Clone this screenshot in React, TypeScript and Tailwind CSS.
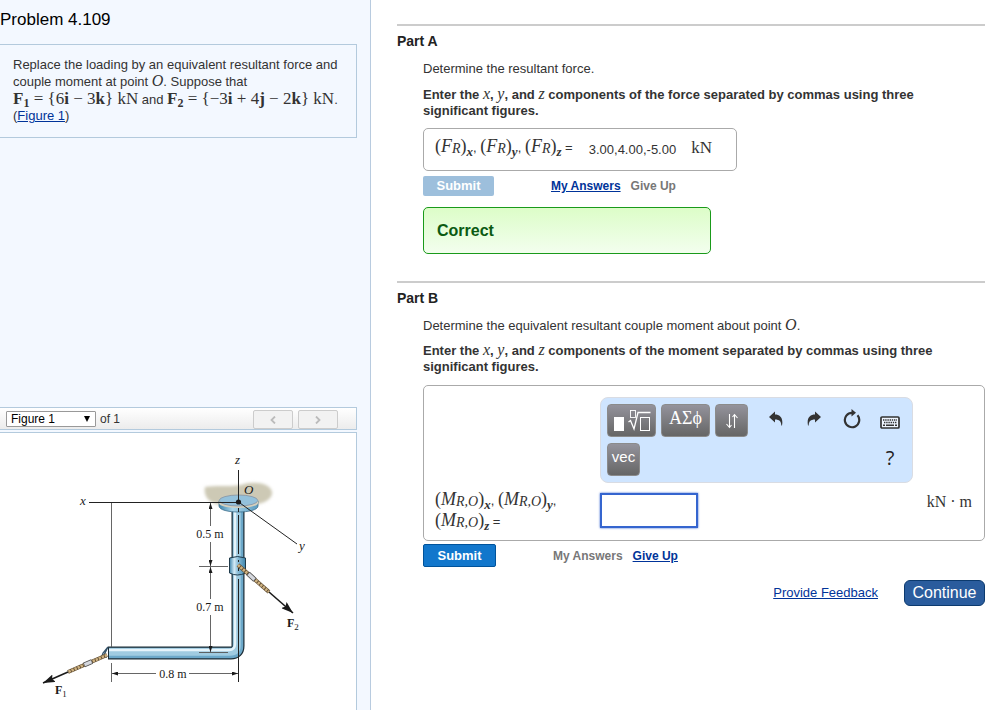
import type { ReactNode } from 'react';

function Sub({ children }: { children: ReactNode }) {
  return <sub className="bottom-0 align-[-3px] text-[12px] leading-none">{children}</sub>;
}

function Var({ children }: { children: ReactNode }) {
  return <i className="font-['Liberation_Serif',serif] text-[16px] leading-none font-normal">{children}</i>;
}

function Component({ name, of, axis }: { name: string; of: string; axis: string }) {
  return (
    <span className="font-['Liberation_Serif',serif] text-[18px] leading-none whitespace-nowrap">
      (<i>{name}</i>
      <sub className="bottom-0 align-[-1px] text-[14px] leading-none italic">{of}</sub>)
      <sub className="bottom-0 align-[-4px] text-[13px] leading-none font-bold italic">{axis}</sub>
    </span>
  );
}

function Part({ title, children }: { title: string; children: ReactNode }) {
  return (
    <section className="border-t-2 border-[#ccc] pt-[5px]">
      <h2 className="text-[14px] leading-5 font-bold text-[#222]">{title}</h2>
      <div className="pl-[26px]">{children}</div>
    </section>
  );
}

function AxisNote({ what }: { what: string }) {
  return (
    <p className="pr-6 text-[13px] leading-4 font-bold">
      Enter the <Var>x</Var>, <Var>y</Var>, and <Var>z</Var> components of the {what} separated by commas using three
      significant figures.
    </p>
  );
}

function Rope({ x1, y1, x2, y2 }: { x1: number; y1: number; x2: number; y2: number }) {
  return (
    <g>
      <line x1={x1} y1={y1} x2={x2} y2={y2} stroke="#5d4a30" strokeWidth="4" />
      <line x1={x1} y1={y1} x2={x2} y2={y2} stroke="#cdb180" strokeWidth="2.8" strokeDasharray="2.4 .9" />
    </g>
  );
}

function PipeFigure() {
  return (
    <svg
      viewBox="0 0 356 277"
      width="356"
      height="277"
      role="img"
      aria-label="Pipe assembly with forces F1 and F2"
      className="block font-['Liberation_Serif',serif]"
      fill="#1a1a1a"
    >
      <defs>
        <linearGradient id="pipeV" x1="0" x2="1">
          <stop offset="0" stopColor="#3f86ad" />
          <stop offset=".3" stopColor="#d4ebf6" />
          <stop offset=".5" stopColor="#8fc0da" />
          <stop offset="1" stopColor="#3f86ad" />
        </linearGradient>
        <linearGradient id="flange" x1="0" x2="1">
          <stop offset="0" stopColor="#3f86ad" />
          <stop offset=".35" stopColor="#a9d5ea" />
          <stop offset="1" stopColor="#5b9cc0" />
        </linearGradient>
        <filter id="soft" x="-20%" y="-40%" width="140%" height="180%">
          <feGaussianBlur stdDeviation="1.5" />
        </filter>
        <marker id="tip" viewBox="0 0 6 4" refX="6" refY="2" markerWidth="6" markerHeight="4" markerUnits="userSpaceOnUse" orient="auto">
          <path d="M0 0L6 2L0 4z" />
        </marker>
        <marker id="force" viewBox="0 0 12 8" refX="12" refY="4" markerWidth="12" markerHeight="8" markerUnits="userSpaceOnUse" orient="auto">
          <path d="M0 0L12 4L0 8L2 4z" />
        </marker>
      </defs>

      {/* ceiling */}
      <path d="M205 54C214 52 228 54 241 52C252 48 270 49 272 59C273 67 262 71 252 72H221C209 71 203 63 205 54z" fill="#cdc9b5" filter="url(#soft)" />

      {/* pipe: dark outline, body, then highlight */}
      <g fill="none" strokeLinejoin="round">
        <path d="M238 74V213Q238 220 231 220H108" stroke="#1d2c35" strokeWidth="13" />
        <path d="M238 74V213Q238 220 231 220H109" stroke="#6ca8c9" strokeWidth="10.600" />
        <path d="M237 74V212Q237 219 230 219H109" stroke="#9fcbe1" strokeWidth="7.500" />
        <path d="M235 74V211Q235 217 229 217H109" stroke="#e6f4fb" strokeWidth="2.400" />
      </g>
      <path d="M229.500 125Q237.500 122 245.500 125V140Q237.500 144 229.500 140z" fill="url(#pipeV)" stroke="#1f3a4a" />

      {/* flange */}
      <path d="M219 68V73C219 81 258 81 258 73V68z" fill="url(#flange)" stroke="#3e6f8b" strokeWidth=".8" />
      <path d="M219 68V70C219 76.500 258 76.500 258 70V68z" fill="#d5d0bd" />
      <ellipse cx="238.500" cy="67.500" rx="19.300" ry="5.500" fill="#94c1db" stroke="#8793a2" strokeWidth=".8" />

      {/* axes */}
      <g stroke="#222" fill="none">
        <path d="M89 69.500H238M238.500 37V69M238.500 69L297 111" />
        <path d="M238.500 75V79M238.500 82V121M238.500 127V129M238.500 132V138M238.500 146V249" />
      </g>
      <circle cx="238.500" cy="69" r="2.600" />

      {/* dimensions */}
      <g stroke="#555" strokeWidth=".9" fill="none">
        <path d="M111.500 70V214M111.500 230V249M199 133.500H228M199 219.500H228" />
        <path d="M210.500 93V70" markerEnd="url(#tip)" />
        <path d="M210.500 109V133" markerEnd="url(#tip)" />
        <path d="M210.500 166V134" markerEnd="url(#tip)" />
        <path d="M210.500 182V219" markerEnd="url(#tip)" />
        <path d="M156 240.500H112" markerEnd="url(#tip)" />
        <path d="M189 240.500H238" markerEnd="url(#tip)" />
      </g>

      {/* cables and forces */}
      <path d="M108 214L103 220L102 223L107 224M108 214L104 222" fill="none" stroke="#35536a" strokeWidth="1.300" />
      <Rope x1={107} y1={222} x2={68} y2={239} />
      <line x1="92" y1="228.500" x2="84" y2="232" stroke="#555" strokeWidth="5" />
      <line x1="91.500" y1="228.700" x2="84.500" y2="231.800" stroke="#d5d8de" strokeWidth="3.200" />
      <line x1="68" y1="239" x2="43" y2="250" stroke="#1a1a1a" strokeWidth="1.600" markerEnd="url(#force)" />
      <Rope x1={238} y1={132} x2={269} y2={159} />
      <line x1="248" y1="140.500" x2="255" y2="147" stroke="#555" strokeWidth="5" />
      <line x1="248.500" y1="141" x2="254.500" y2="146.500" stroke="#d5d8de" strokeWidth="3.200" />
      <line x1="269" y1="159" x2="293" y2="180" stroke="#1a1a1a" strokeWidth="1.600" markerEnd="url(#force)" />

      <g fontSize="13" fontStyle="italic">
        <text x="235" y="31">z</text>
        <text x="80" y="72">x</text>
        <text x="244" y="61">O</text>
        <text x="299" y="117">y</text>
      </g>
      <g fontSize="12" textAnchor="middle">
        <text x="210" y="105">0.5 m</text>
        <text x="210" y="178">0.7 m</text>
        <text x="173" y="245">0.8 m</text>
      </g>
      <g fontSize="12" fontWeight="bold">
        <text x="55" y="261">F<tspan fontSize="9" fontWeight="normal" dy="3">1</tspan></text>
        <text x="287" y="194">F<tspan fontSize="9" fontWeight="normal" dy="3">2</tspan></text>
      </g>
    </svg>
  );
}

function ArrowIcon({ flip = false }: { flip?: boolean }) {
  return (
    <svg viewBox="0 0 14 15" className={flip ? 'h-[15px] w-[14px] -scale-x-100' : 'h-[15px] w-[14px]'} fill="#333" aria-hidden>
      <path d="M0 6L6 0.500V3.500C11 3.500 14.500 7 13 14.500H12.300C12.300 10.500 10.500 8.500 6 8.500V11.500z" />
    </svg>
  );
}

function ResetIcon() {
  return (
    <svg viewBox="0 0 18 20" className="h-5 w-[18px]" aria-hidden>
      <path d="M14.500 6.300A7.200 7.200 0 1 1 9 3.800" fill="none" stroke="#333" strokeWidth="2.200" />
      <path d="M8.500 0L13 3.800L8.500 7.600z" fill="#333" />
    </svg>
  );
}

function KeyboardIcon() {
  return (
    <svg viewBox="0 0 20 13" className="h-[13px] w-5" aria-hidden>
      <rect x="1" y="1" width="18" height="11" rx="1" fill="#eef5ff" stroke="#333" strokeWidth="1.700" />
      <path d="M3 4H17M4 6.500H17" stroke="#333" strokeWidth="1.600" strokeDasharray="1.400 .8" />
      <path d="M3 9.300H5M6 9.300H14M15 9.300H17" stroke="#333" strokeWidth="1.600" />
    </svg>
  );
}

function TemplateIcon() {
  return (
    <svg viewBox="0 0 40 24" className="h-6 w-10" fill="none" stroke="#fff" aria-hidden>
      <rect x="2" y="8" width="10" height="14" fill="#fff" stroke="none" />
      <rect x="18.500" y="1.500" width="5" height="7" strokeWidth=".9" />
      <path d="M16.500 13L18.500 11.500L22 20L26 3.500H38.500" strokeWidth="1.300" />
      <rect x="28.500" y="8.500" width="9" height="13" />
    </svg>
  );
}

function SwapIcon() {
  return (
    <svg viewBox="0 0 14 16" className="h-4 w-[14px]" fill="none" stroke="#fff" strokeWidth="1.100" aria-hidden>
      <path d="M4.500 1V14.500M1.500 11L4.500 14.500L6.500 12M9.500 15V1.500M7.500 4L9.500 1.500L12.500 5" />
    </svg>
  );
}

const key =
  'flex h-[33px] items-center justify-center rounded-[4px] border border-[#8b8b8b] bg-linear-to-b from-[#94939c] to-[#666] text-white';
const tool = 'flex h-[33px] w-[38px] items-center justify-center';
const link = 'text-[#039] underline';

function MathToolbar() {
  return (
    <div className="flex h-[86px] w-[313px] justify-between rounded-[8px] border border-[#d9dce3] bg-[#cfe5ff] py-[6px] pr-[3px] pl-[6px]">
      <div className="flex flex-col gap-[6px]">
        <div className="flex gap-[5px]">
          <button aria-label="Templates" className={`${key} w-[49px]`}><TemplateIcon /></button>
          <button className={`${key} w-[49px] pb-1 font-['Liberation_Serif',serif] text-[18px]`}>ΑΣϕ</button>
          <button aria-label="Swap" className={`${key} w-[33px]`}><SwapIcon /></button>
        </div>
        <button className={`${key} w-[33px] pb-1 text-[15px]`}>vec</button>
      </div>
      <div className="flex flex-col items-end gap-1">
        <div className="flex">
          <button aria-label="Undo" className={`${tool} pb-1`}><ArrowIcon /></button>
          <button aria-label="Redo" className={`${tool} pb-1`}><ArrowIcon flip /></button>
          <button aria-label="Reset" className={`${tool} pb-1`}><ResetIcon /></button>
          <button aria-label="Keyboard" className={`${tool} pt-1`}><KeyboardIcon /></button>
        </div>
        <button aria-label="Help" className={`${tool} font-['Open_Sans',sans-serif] text-[20px] text-[#222]`}>?</button>
      </div>
    </div>
  );
}

function Sidebar() {
  const pager =
    'flex h-[19px] w-10 items-center justify-center rounded-[2px] border border-[#ccc] bg-[#f2f2f2] text-[#bbb]';
  return (
    <aside className="flex w-[371px] shrink-0 flex-col border-r border-[#b8cbdf] bg-[#f3f8ff] pr-[13px]">
      <h1 className="pt-[10px] pb-[14px] text-[17px] leading-5 text-black">Problem 4.109</h1>
      <div className="border border-l-0 border-[#b3cadd] pt-[12px] pr-2 pb-[13px] pl-[13px] text-[13px] leading-4">
        <p>
          Replace the loading by an equivalent resultant force and couple moment at point <Var>O</Var>. Suppose that
        </p>
        <p className="h-[17px] leading-4 whitespace-nowrap">
          <span className="font-['Liberation_Serif',serif] text-[17px] leading-none">
            <b>F<Sub>1</Sub></b> = {'{'}6<b>i</b> − 3<b>k</b>{'}'} kN
          </span>{' '}
          and{' '}
          <span className="font-['Liberation_Serif',serif] text-[17px] leading-none">
            <b>F<Sub>2</Sub></b> = {'{'}−3<b>i</b> + 4<b>j</b> − 2<b>k</b>{'}'} kN
          </span>
          .
        </p>
        <p className="pt-[1px]">(<a href="#figure" className={link}>Figure 1</a>)</p>
      </div>
      <div className="mt-auto flex h-[23px] items-center border border-l-0 border-[#b3cadd] bg-linear-to-b from-white to-[#ececec] pr-[18px] pl-[6px] text-[12px]">
        <div className="relative">
          <select aria-label="Figure" className="block h-4 w-[90px] appearance-none rounded-[1px] border border-[#999] bg-white pl-1 text-[12px] leading-[14px] text-black">
            <option>Figure 1</option>
          </select>
          <svg viewBox="0 0 6 6" className="pointer-events-none absolute top-[5px] right-[6px] size-[6px]" aria-hidden><path d="M0 0H6L3 6z" /></svg>
        </div>
        <span className="pl-1">of 1</span>
        <div className="ml-auto flex gap-[5px] pt-[2px]">
          <button aria-label="Previous figure" disabled className={pager}>
            <svg viewBox="0 0 6 8" className="h-2 w-[6px]" fill="none" stroke="currentColor" strokeWidth="1.800"><path d="M5 .5L1.500 4L5 7.500" /></svg>
          </button>
          <button aria-label="Next figure" disabled className={pager}>
            <svg viewBox="0 0 6 8" className="h-2 w-[6px]" fill="none" stroke="currentColor" strokeWidth="1.800"><path d="M1 .5L4.500 4L1 7.500" /></svg>
          </button>
        </div>
      </div>
      <div id="figure" className="mt-[2px] border-t border-r border-[#b3cadd] bg-white">
        <PipeFigure />
      </div>
    </aside>
  );
}

export default function App() {
  return (
    <div className="flex min-h-screen bg-white font-['Liberation_Sans',Arial,sans-serif] text-[13px] text-[#333]">
      <Sidebar />
      <main className="min-w-0 flex-1 pt-6 pr-[11px] pl-[26px]">
        <Part title="Part A">
          <p className="pt-[10px] pb-[9px] leading-4">Determine the resultant force.</p>
          <AxisNote what="force" />
          <div className="mt-[9px] flex h-[43px] w-[314px] items-center rounded-[5px] border border-[#aaa] pl-[11px]">
            <span className="pb-1 whitespace-nowrap">
              <Component name="F" of="R" axis="x" />, <Component name="F" of="R" axis="y" />, <Component name="F" of="R" axis="z" /> =
            </span>
            <span className="pl-4">3.00,4.00,-5.00</span>
            <span className="pb-[3px] pl-[15px] font-['Liberation_Serif',serif] text-[17px]">kN</span>
          </div>
          <div className="mt-[5px] flex h-5 items-center text-[12px] font-bold">
            <button disabled className="h-5 w-[71px] rounded-[2px] bg-[#9dbfdc] text-[13px] text-white">Submit</button>
            <a href="#answers-a" className={`${link} ml-[57px]`}>My Answers</a>
            <span className="ml-[10px] text-[#777]">Give Up</span>
          </div>
          <div className="mt-[11px] flex h-[47px] w-[288px] items-center rounded-[5px] border border-[#1a9a1a] bg-linear-to-b from-[#dcfdc8] to-[#f3feee] pl-[13px] text-[16px] font-bold text-[#0b5a12]">
            Correct
          </div>
        </Part>
        <div className="pt-[27px]">
          <Part title="Part B">
            <p className="pt-[9px] pb-2 leading-4">
              Determine the equivalent resultant couple moment about point <Var>O</Var>.
            </p>
            <AxisNote what="moment" />
            <div className="mt-[10px] flex h-[156px] rounded-[5px] border border-[#aaa] pt-[11px] pr-3 pb-2 pl-[11px]">
              <label htmlFor="moment" className="w-[165px] shrink-0 self-end leading-5">
                <Component name="M" of="R,O" axis="x" />, <Component name="M" of="R,O" axis="y" />,<br />
                <Component name="M" of="R,O" axis="z" /> =
              </label>
              <div className="flex flex-col gap-[10px]">
                <MathToolbar />
                <input id="moment" className="h-[35px] w-[98px] border-2 border-[#3565cf] bg-white px-1 shadow-[0_0_2px_#3565cf] outline-none" />
              </div>
              <span className="ml-auto self-end pb-[18px] font-['Liberation_Serif',serif] text-[16px]">kN · m</span>
            </div>
            <div className="mt-[3px] flex h-[23px] items-center text-[12px] font-bold">
              <button className="h-[23px] w-[73px] rounded-[2px] border border-[#00539b] bg-[#1277cc] text-[13px] text-white">Submit</button>
              <span className="ml-[57px] text-[#777]">My Answers</span>
              <a href="#give-up" className={`${link} ml-[10px]`}>Give Up</a>
            </div>
          </Part>
        </div>
        <div className="flex items-center justify-end gap-[26px] pt-[13px]">
          <a href="#feedback" className={link}>Provide Feedback</a>
          <button className="h-[26px] w-[81px] rounded-[6px] border border-[#0c3a6e] bg-[#2a5c9d] text-[16px] leading-5 text-white">Continue</button>
        </div>
      </main>
    </div>
  );
}
